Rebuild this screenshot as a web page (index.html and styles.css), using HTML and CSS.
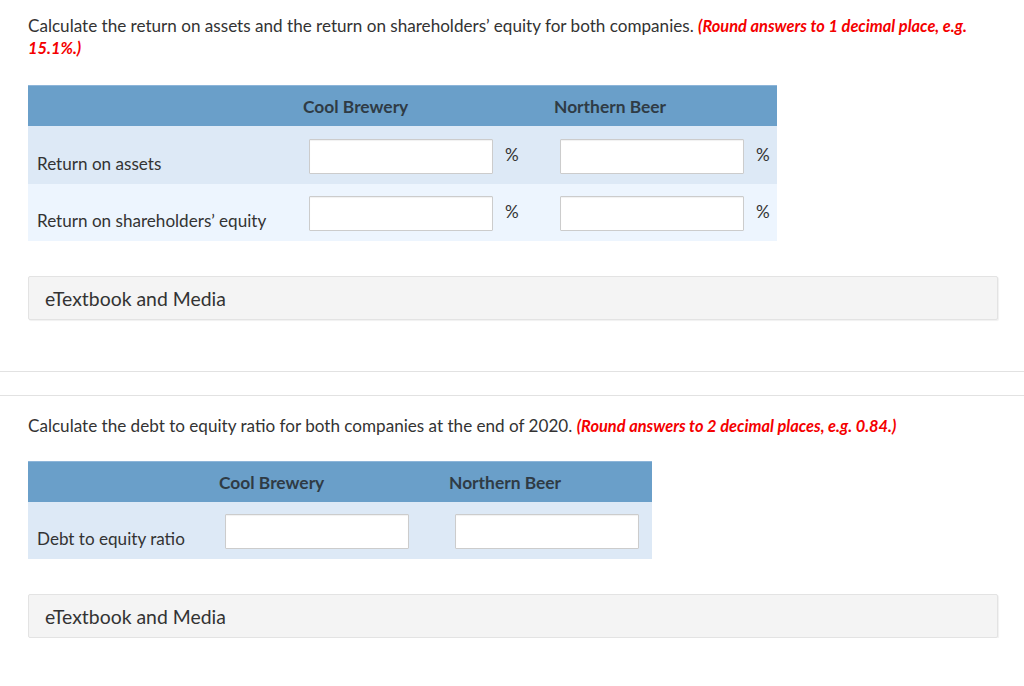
FILE: index.html
```html
<!DOCTYPE html>
<html lang="en">
<head>
<meta charset="utf-8">
<title>Ratios</title>
<link rel="stylesheet" href="styles.css">
</head>
<body>
<section class="part part-first">
  <p class="question">Calculate the return on assets and the return on shareholders’ equity for both companies. <span class="hint">(Round answers to 1 decimal place, e.g. 15.1%.)</span></p>
  <div class="table table-roa">
    <div class="hcell"></div>
    <div class="hcell">Cool Brewery</div>
    <div class="hcell">Northern Beer</div>

    <div class="cell label odd">Return on assets</div>
    <div class="cell odd"><span class="field"></span><span class="unit">%</span></div>
    <div class="cell odd"><span class="field"></span><span class="unit">%</span></div>

    <div class="cell label even">Return on shareholders’ equity</div>
    <div class="cell even"><span class="field"></span><span class="unit">%</span></div>
    <div class="cell even"><span class="field"></span><span class="unit">%</span></div>
  </div>
  <div class="media">eTextbook and Media</div>
</section>

<div class="divider"></div>

<section class="part part-second">
  <p class="question">Calculate the debt to equity ratio for both companies at the end of 2020. <span class="hint">(Round answers to 2 decimal places, e.g. 0.84.)</span></p>
  <div class="table table-de">
    <div class="hcell"></div>
    <div class="hcell">Cool Brewery</div>
    <div class="hcell">Northern Beer</div>

    <div class="cell label odd">Debt to equity ratio</div>
    <div class="cell odd"><span class="field"></span></div>
    <div class="cell odd"><span class="field"></span></div>
  </div>
  <div class="media">eTextbook and Media</div>
</section>
</body>
</html>
```

FILE: styles.css
```css
* { box-sizing: border-box; }

html, body {
  margin: 0;
  padding: 0;
  background: #ffffff;
}

body {
  font-family: Lato, "Open Sans", "Liberation Sans", sans-serif;
  font-size: 17.1px;
  color: #333333;
}

.part {
  width: 998px;
  padding-left: 28px;
}

.part-first { padding-top: 15px; padding-bottom: 51px; }
.part-second { padding-top: 19px; }

.question {
  margin: 0;
  font-size: 17.1px;
  line-height: 22px;
  color: #333333;
}

.hint {
  color: #f40000;
  font-weight: 700;
  font-style: italic;
  font-size: 16.4px;
  line-height: 22px;
}

.table {
  display: grid;
}

.table-roa {
  margin-top: 26px;
  width: 749px;
  grid-template-columns: 271px 251px 227px;
  grid-template-rows: 41px 58px 57px;
}

.table-de {
  margin-top: 24px;
  width: 624px;
  grid-template-columns: 187px 230px 207px;
  grid-template-rows: 41px 57px;
}

.hcell {
  background: #6a9fc9;
  border-top: 1px solid #8db5d9;
  display: flex;
  align-items: center;
  padding-left: 4px;
  font-weight: 700;
  font-size: 17.4px;
  color: #2f3b45;
}

.cell {
  display: flex;
  align-items: center;
  padding: 12px 0 10px 10px;
}

.cell.label {
  align-items: flex-end;
  padding: 0 0 9px 9px;
  line-height: 22px;
  color: #333333;
}

.odd { background: #dde9f6; }
.even { background: #edf5fe; }

.field {
  display: block;
  width: 184px;
  height: 35px;
  background: #ffffff;
  border: 1px solid #cccccc;
  border-radius: 1px;
  box-shadow: inset 0 1px 1px rgba(0, 0, 0, 0.06);
}

.unit {
  margin-left: 12px;
  margin-top: -4px;
  color: #333333;
}

.media {
  margin-top: 35px;
  height: 44px;
  background: #f4f4f4;
  border: 1px solid #e3e3e3;
  border-radius: 2px;
  box-shadow: 1px 1px 1px rgba(0, 0, 0, 0.06);
  display: flex;
  align-items: center;
  padding-left: 16px;
  font-size: 19.4px;
  color: #333333;
}

.table-de + .media { margin-top: 35px; }

.divider {
  height: 25px;
  border-top: 1px solid #e2e2e2;
  border-bottom: 1px solid #e2e2e2;
}
```
